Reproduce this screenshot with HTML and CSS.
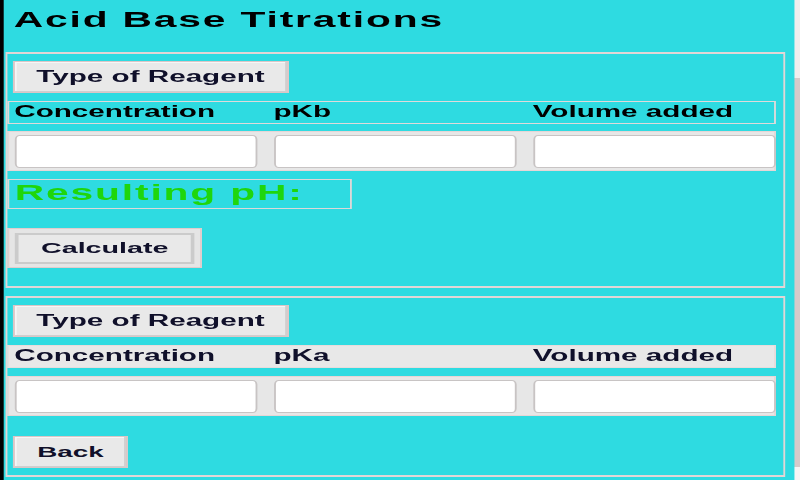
FILE: index.html
```html
<!DOCTYPE html>
<html lang="en">
<head>
<meta charset="utf-8">
<title>Acid Base Titrations</title>
<link rel="stylesheet" href="styles.css">
</head>
<body>
<div class="page">
  <div class="main">
    <h1 class="title">Acid Base Titrations</h1>

    <section class="panel panel-first">
      <button class="btn btn-type" type="button">Type of Reagent</button>
      <div class="labels labels-plain">
        <span class="label">Concentration</span>
        <span class="label">pKb</span>
        <span class="label">Volume added</span>
      </div>
      <div class="fields">
        <input class="field" type="text">
        <input class="field" type="text">
        <input class="field" type="text">
      </div>
      <div class="result">Resulting pH:</div>
      <div class="calc-wrap">
        <button class="btn btn-calc" type="button">Calculate</button>
      </div>
    </section>

    <section class="panel panel-second">
      <button class="btn btn-type" type="button">Type of Reagent</button>
      <div class="labels labels-filled">
        <span class="label">Concentration</span>
        <span class="label">pKa</span>
        <span class="label">Volume added</span>
      </div>
      <div class="fields">
        <input class="field" type="text">
        <input class="field" type="text">
        <input class="field" type="text">
      </div>
      <button class="btn btn-back" type="button">Back</button>
    </section>
  </div>
  <div class="scrollbar">
    <div class="sb-top"></div>
    <div class="sb-thumb"></div>
    <div class="sb-bottom"></div>
  </div>
</div>
</body>
</html>
```
FILE: styles.css
```css
html, body {
  margin: 0;
  padding: 0;
  background: #2edbe1;
  overflow: hidden;
}

body {
  font-family: "Liberation Sans", Arial, sans-serif;
  font-weight: bold;
  color: #000;
}

/* the screenshot is horizontally stretched: lay out at 432px and stretch */
.page {
  width: 432px;
  height: 480px;
  display: flex;
  transform: scaleX(1.85185);
  transform-origin: 0 0;
}

.main {
  flex: 1;
  border-left: 2.3px solid #000;
  display: flex;
  flex-direction: column;
}

.title {
  margin: 0 0 19px 0;
  padding: 7px 0 0 5.4px;
  font-size: 22px;
  line-height: 26px;
  letter-spacing: 1px;
  font-weight: bold;
  color: #000;
}

.panel {
  box-sizing: border-box;
  width: 420.4px;
  margin-left: 1.2px;
  border-style: solid;
  border-width: 2px 1.6px;
  border-color: #e2d6d6;
  display: flex;
  flex-direction: column;
  align-items: flex-start;
}

.panel-first {
  padding: 6.5px 0 17.5px 0;
}

.panel-second {
  margin-top: 8px;
  padding: 7px 0 7px 0;
}

.btn {
  font-family: "Liberation Sans", Arial, sans-serif;
  font-weight: bold;
  color: #10102a;
  background: #e9e9e9;
  padding: 0;
  margin: 0;
  cursor: pointer;
  -webkit-appearance: none;
  appearance: none;
}

.btn-type {
  box-sizing: border-box;
  width: 149px;
  height: 32px;
  margin-left: 2.6px;
  font-size: 16px;
  border: 1px solid #dcc6c6;
  box-shadow: inset -1px -1px 0 #cfcfcf, inset 1px 1px 0 #f6f6f6;
}

.btn-back {
  box-sizing: border-box;
  width: 62.6px;
  height: 32px;
  margin-top: 20px;
  margin-left: 2.6px;
  font-size: 15px;
  border: 1px solid #dcc6c6;
  box-shadow: inset -1px -1px 0 #cfcfcf, inset 1px 1px 0 #f6f6f6;
}

.labels {
  box-sizing: border-box;
  width: 415.2px;
  display: grid;
  grid-template-columns: 140px 140px 1fr;
  font-size: 16px;
  line-height: 20px;
  margin-top: 8.5px;
}

.labels-plain {
  height: 23px;
  border: 1px solid #e0dada;
  color: #000;
}

.labels-filled {
  height: 23px;
  border: 1px solid #e8dcdc;
  background: #e8e8e8;
  color: #10102a;
}

.label {
  padding-left: 2.5px;
  white-space: nowrap;
}

.fields {
  box-sizing: border-box;
  width: 415.2px;
  height: 40px;
  margin-top: 7px;
  padding: 3px 0 2px 0;
  border: 1px solid #e6d6d6;
  background: #e7e7e7;
  display: grid;
  grid-template-columns: 140px 140px 1fr;
}

.panel-second .fields {
  margin-top: 7.5px;
}

.field {
  box-sizing: border-box;
  width: 130.6px;
  height: 33px;
  margin: 0 0 0 2.8px;
  padding: 0;
  background: #fff;
  border: 1.3px solid #c8c4c4;
  border-radius: 2.5px / 4.5px;
  outline: none;
  -webkit-appearance: none;
  appearance: none;
}

.result {
  box-sizing: border-box;
  width: 186.3px;
  height: 30px;
  margin-top: 8px;
  padding: 0 0 2px 2.8px;
  border: 1px solid #dcd8d8;
  font-size: 22px;
  line-height: 26px;
  letter-spacing: 1px;
  color: #1fd60c;
  white-space: nowrap;
}

.calc-wrap {
  box-sizing: border-box;
  width: 104.8px;
  height: 40px;
  margin-top: 19px;
  padding: 3.7px 2.8px 3px 2.8px;
  border: 1px solid #e2cccc;
  background: #e5e5e5;
  display: flex;
}

.btn-calc {
  box-sizing: border-box;
  width: 97.2px;
  height: 31.3px;
  font-size: 15.5px;
  border: 2px solid #cbcbcb;
}

.scrollbar {
  width: 2.7px;
  display: flex;
  flex-direction: column;
}

.sb-top {
  height: 78px;
  background: #f1eeee;
}

.sb-thumb {
  flex: 1;
  background: #d6caca;
}

.sb-bottom {
  height: 13px;
  background: #f6f6f6;
}
```
